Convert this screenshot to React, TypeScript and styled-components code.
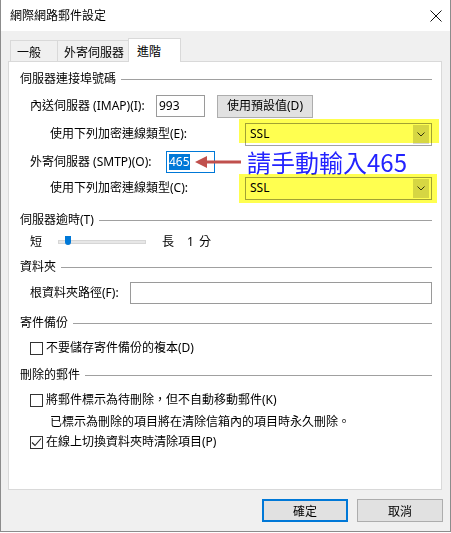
import React from "react";
import styled, { createGlobalStyle } from "styled-components";

const GlobalStyle = createGlobalStyle`
  html, body {
    margin: 0;
    padding: 0;
    background: #ffffff;
  }
  body {
    font-family: "Noto Sans", "Noto Sans CJK TC", sans-serif;
    font-size: 12px;
    color: #000;
  }
  * {
    box-sizing: border-box;
  }
`;

const Window = styled.div`
  width: 451px;
  height: 532px;
  border: 1px solid #8c8c8c;
  border-top: none;
  display: flex;
  flex-direction: column;
  background: #f0f0f0;
`;

const TitleBar = styled.div`
  height: 31px;
  flex: none;
  background: #fff;
  display: flex;
  align-items: center;
  justify-content: space-between;
  padding: 0 8px 0 9px;
  line-height: 16px;
`;

const Body = styled.div`
  flex: 1;
  padding: 7px 8px 0 7px;
  display: flex;
  flex-direction: column;
`;

const TabStrip = styled.div`
  height: 23px;
  display: flex;
  align-items: flex-end;
  padding-left: 2px;
`;

const Tab = styled.div<{ $w: number; $active?: boolean }>`
  position: relative;
  z-index: ${(p) => (p.$active ? 1 : 0)};
  width: ${(p) => p.$w}px;
  height: ${(p) => (p.$active ? 24 : 21)}px;
  margin-bottom: ${(p) => (p.$active ? -1 : 0)}px;
  padding: ${(p) => (p.$active ? "0 0 0 8px" : "2px 0 0 6px")};
  border: 1px solid #d9d9d9;
  border-bottom: none;
  background: ${(p) => (p.$active ? "#fff" : "#f0f0f0")};
  display: flex;
  align-items: center;
  & + & {
    margin-left: -1px;
  }
`;

const Panel = styled.div`
  height: 429px;
  background: #fff;
  border: 1px solid #d9d9d9;
  padding: 9px 9px 0 11px;
  display: flex;
  flex-direction: column;
`;

// section title followed by a thin rule
const GroupHeader = styled.div<{ $mt: number }>`
  margin-top: ${(p) => p.$mt}px;
  height: 16px;
  line-height: 16px;
  display: flex;
  align-items: center;
  gap: 5px;
  white-space: nowrap;
  &::after {
    content: "";
    flex: 1;
    height: 0;
    border-top: 1px solid #a0a0a0;
  }
`;

const Row = styled.div<{ $mt: number; $h?: number; $indent?: number }>`
  position: relative;
  margin-top: ${(p) => p.$mt}px;
  height: ${(p) => p.$h ?? 16}px;
  padding-left: ${(p) => p.$indent ?? 10}px;
  display: flex;
  align-items: center;
  line-height: 16px;
  white-space: nowrap;
`;

const Label = styled.span<{ $w?: number }>`
  flex: none;
  width: ${(p) => (p.$w ? `${p.$w}px` : "auto")};
`;

const TextBox = styled.div<{ $w?: number; $focus?: boolean }>`
  flex: ${(p) => (p.$w ? "none" : 1)};
  width: ${(p) => (p.$w ? `${p.$w}px` : "auto")};
  height: 22px;
  border: 1px solid ${(p) => (p.$focus ? "#0078d7" : "#9a9a9a")};
  background: #fff;
  display: flex;
  align-items: center;
  padding-left: 2px;
`;

const Selected = styled.span`
  background: #0078d7;
  color: #fff;
  line-height: 16px;
`;

const Button = styled.button<{ $w: number; $ml?: number; $primary?: boolean }>`
  flex: none;
  width: ${(p) => p.$w}px;
  height: 23px;
  margin-left: ${(p) => p.$ml ?? 0}px;
  padding: 0;
  font: inherit;
  color: #000;
  background: #e1e1e1;
  border: ${(p) => (p.$primary ? "2px solid #0078d7" : "1px solid #adadad")};
`;

const Combo = styled.div`
  position: relative;
  margin-left: auto;
  width: 187px;
  height: 23px;
  border: 1px solid #a2a2a2;
  background: #fff;
  display: flex;
  align-items: center;
  padding-left: 4px;
`;

const ComboValue = styled.span`
  flex: 1;
`;

const ComboButton = styled.span`
  align-self: stretch;
  width: 16px;
  margin: 1px 2px 1px 0;
  background: #d6d6d6;
  display: flex;
  align-items: center;
  justify-content: center;
`;

// highlighter marker laid over the combo box
const Highlight = styled.div<{ $l: number; $r: number; $t: number; $b: number }>`
  position: absolute;
  left: ${(p) => p.$l}px;
  right: ${(p) => p.$r}px;
  top: ${(p) => p.$t}px;
  bottom: ${(p) => p.$b}px;
  background: rgb(255, 255, 80);
  mix-blend-mode: multiply;
  pointer-events: none;
`;

const Annotation = styled.div`
  position: absolute;
  left: 175px;
  top: -3px;
  height: 30px;
  display: flex;
  align-items: center;
  gap: 6px;
`;

const AnnotationText = styled.span`
  font-family: "Noto Sans CJK TC", sans-serif;
  font-size: 24px;
  line-height: 30px;
  color: #2323ff;
`;

const Track = styled.div`
  position: relative;
  flex: none;
  width: 88px;
  height: 4px;
  margin: 0 16px;
  background: #e7e7e7;
  border: 1px solid #d6d6d6;
`;

const Thumb = styled.div`
  position: absolute;
  left: 6px;
  top: -5px;
  width: 6px;
  height: 9px;
  background: #0078d7;
  border-radius: 0 0 3px 3px;
`;

const Gap = styled.span<{ $w: number }>`
  display: inline-block;
  width: ${(p) => p.$w}px;
`;

const Check = styled.span`
  flex: none;
  width: 13px;
  height: 13px;
  margin-right: 3px;
  border: 1px solid #333;
  background: #fff;
  display: flex;
  align-items: center;
  justify-content: center;
`;

const Footer = styled.div`
  display: flex;
  justify-content: flex-end;
  gap: 9px;
  margin: 9px -1px 0 0;
`;

const CloseIcon = () => (
  <svg width="12" height="12" viewBox="0 0 12 12">
    <path d="M0.5 0.5 L11.5 11.5 M11.5 0.5 L0.5 11.5" stroke="#111" strokeWidth="1" fill="none" />
  </svg>
);

const Chevron = () => (
  <svg width="8" height="5" viewBox="0 0 8 5">
    <path d="M0.5 0.5 L4 4 L7.5 0.5" stroke="#333" strokeWidth="1" fill="none" />
  </svg>
);

const Arrow = () => (
  <svg width="46" height="14" viewBox="0 0 46 14">
    <path d="M10 7 L46 7" stroke="#c0504d" strokeWidth="3" />
    <path d="M0 7 L12 1 L12 13 Z" fill="#c0504d" />
  </svg>
);

const CheckMark = () => (
  <svg width="11" height="11" viewBox="0 0 11 11">
    <path d="M1 5.5 L4 8.5 L10 1.5" stroke="#222" strokeWidth="1.1" fill="none" />
  </svg>
);

const CheckRow = ({ mt, checked, children }: { mt: number; checked?: boolean; children: React.ReactNode }) => (
  <Row $mt={mt}>
    <Check>{checked && <CheckMark />}</Check>
    <span>{children}</span>
  </Row>
);

export default function App() {
  return (
    <>
      <GlobalStyle />
      <Window>
        <TitleBar>
          <span>網際網路郵件設定</span>
          <CloseIcon />
        </TitleBar>
        <Body>
          <TabStrip>
            <Tab $w={48}>一般</Tab>
            <Tab $w={72}>外寄伺服器</Tab>
            <Tab $w={53} $active>
              進階
            </Tab>
          </TabStrip>
          <Panel>
            <GroupHeader $mt={0}>伺服器連接埠號碼</GroupHeader>
            <Row $mt={7} $h={24}>
              <Label $w={126}>內送伺服器 (IMAP)(I):</Label>
              <TextBox $w={49}>993</TextBox>
              <Button $w={96} $ml={12}>
                使用預設值(D)
              </Button>
            </Row>
            <Row $mt={4} $h={24} $indent={30}>
              <Label>使用下列加密連線類型(E):</Label>
              <Combo>
                <ComboValue>SSL</ComboValue>
                <ComboButton>
                  <Chevron />
                </ComboButton>
                <Highlight $l={-7} $r={-8} $t={-5} $b={2} />
              </Combo>
            </Row>
            <Row $mt={4} $h={24}>
              <Label $w={136}>外寄伺服器 (SMTP)(O):</Label>
              <TextBox $w={49} $focus>
                <Selected>465</Selected>
              </TextBox>
              <Annotation>
                <Arrow />
                <AnnotationText>請手動輸入465</AnnotationText>
              </Annotation>
            </Row>
            <Row $mt={2} $h={24} $indent={30}>
              <Label>使用下列加密連線類型(C):</Label>
              <Combo>
                <ComboValue>SSL</ComboValue>
                <ComboButton>
                  <Chevron />
                </ComboButton>
                <Highlight $l={-7} $r={-6} $t={-4} $b={-4} />
              </Combo>
            </Row>

            <GroupHeader $mt={12}>伺服器逾時(T)</GroupHeader>
            <Row $mt={6}>
              <span>短</span>
              <Track>
                <Thumb />
              </Track>
              <span>長</span>
              <Gap $w={13} />
              <span>1</span>
              <Gap $w={5} />
              <span>分</span>
            </Row>

            <GroupHeader $mt={9}>資料夾</GroupHeader>
            <Row $mt={6} $h={24}>
              <Label $w={100}>根資料夾路徑(F):</Label>
              <TextBox />
            </Row>

            <GroupHeader $mt={10}>寄件備份</GroupHeader>
            <CheckRow mt={9}>不要儲存寄件備份的複本(D)</CheckRow>

            <GroupHeader $mt={11}>刪除的郵件</GroupHeader>
            <CheckRow mt={9}>將郵件標示為待刪除，但不自動移動郵件(K)</CheckRow>
            <Row $mt={6} $indent={30}>
              已標示為刪除的項目將在清除信箱內的項目時永久刪除。
            </Row>
            <CheckRow mt={4} checked>
              在線上切換資料夾時清除項目(P)
            </CheckRow>
          </Panel>
          <Footer>
            <Button $w={86} $primary>
              確定
            </Button>
            <Button $w={86}>取消</Button>
          </Footer>
        </Body>
      </Window>
    </>
  );
}
